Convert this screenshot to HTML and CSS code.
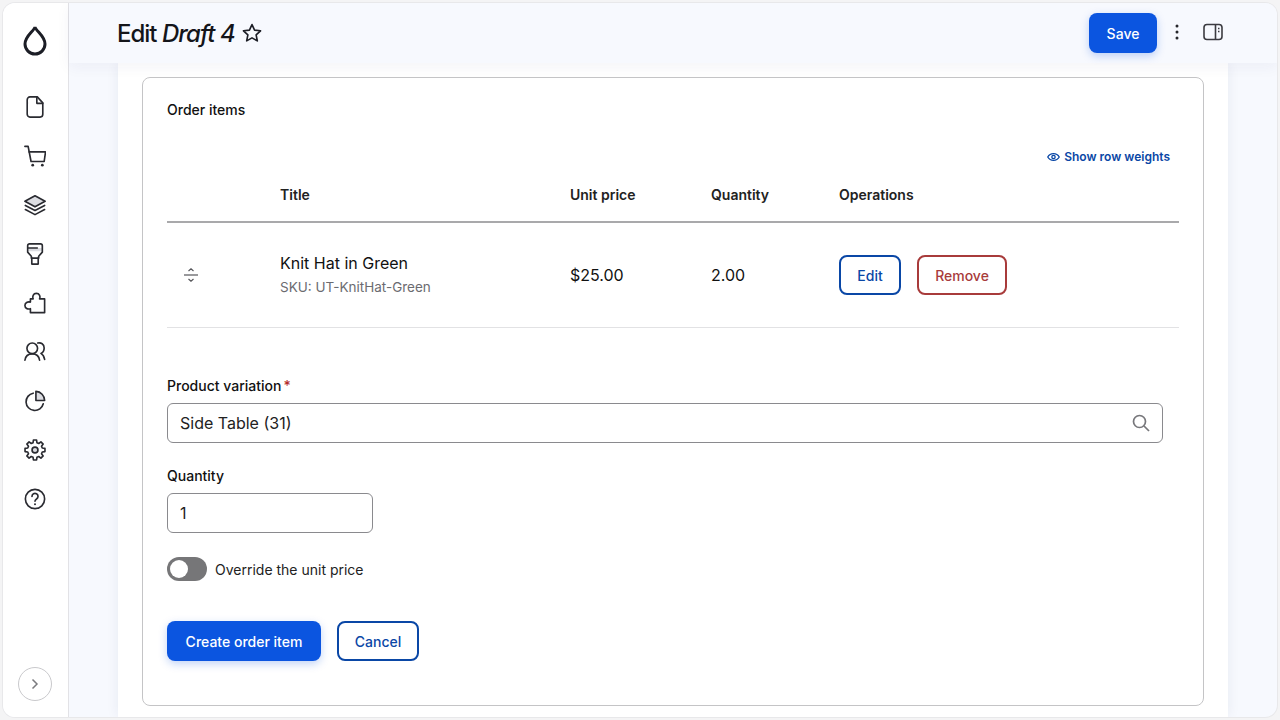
FILE: index.html
```html
<!DOCTYPE html>
<html lang="en">
<head>
    <meta charset="UTF-8">
    <title>Edit Draft 4</title>
    <link rel="stylesheet" href="styles.css">
</head>
<body>
    <div class="window">
        <aside class="sidebar">
            <svg class="logo" width="28" height="34" viewBox="0 0 28 34" fill="none" stroke="#1c1e26" stroke-width="3"><path d="M14 3 C15 7 24 12 24 20 A10 10 0 0 1 4 20 C4 12 13 7 14 3 Z"/></svg>
            <nav class="nav">
                <svg viewBox="0 0 24 24"><path d="M3.500 4a3 3 0 0 1 3-3h8l6 6.500V20a3 3 0 0 1-3 3h-11a3 3 0 0 1-3-3z"/><path d="M14 1.200V8h6.500"/></svg>
                <svg viewBox="0 0 24 24"><path d="M1 1.500h3.500L7.700 18h13.800"/><path d="M5.500 7.500H23.500L22 18"/><circle class="dot" cx="9.500" cy="22" r="1.500"/><circle class="dot" cx="20" cy="22" r="1.500"/></svg>
                <svg viewBox="0 0 24 24"><path class="tint" d="M12 2 23 8l-11 6L1 8z"/><path d="M1.500 12.500 12 18l10.500-5.500"/><path d="M1.500 17 12 22.500 22.500 17"/></svg>
                <svg viewBox="0 0 24 24"><path class="tint no-stroke" d="M5 5.500h14.500V9H5z"/><path d="M6 1h12a2 2 0 0 1 2 2v7l-4 4.500v2H8v-2l-4-4.500V3a2 2 0 0 1 2-2z"/><path d="M4.500 5.500h10"/><path d="M8.500 16.500V23h7v-6.500"/></svg>
                <svg viewBox="0 0 24 24"><path d="M7 22.500H22.500V7.500H17c1.200-2.500 0-6-3.500-6s-4.700 3.500-3.500 6H7V11c-3-.8-6 .8-6 3.700s3 4.500 6 3.500z"/></svg>
                <svg viewBox="0 0 24 24"><circle cx="9" cy="8" r="5.800"/><path d="M1 21c.5-4 3-7 8-7s7.500 3 8 7"/><path d="M15 2.200c3.500-.8 7 1 7 5.300 0 2.500-1.500 5-3.500 6 2 1.200 3.500 3.500 4 6.500"/></svg>
                <svg viewBox="0 0 24 24"><path class="tint" d="M13 1.500a10 10 0 0 1 9.500 10h-9.500z"/><path d="M10 3.500a9.500 9.500 0 1 0 11 11.500"/></svg>
                <svg viewBox="0 0 24 24"><circle class="tint" cx="12" cy="12" r="3.200"/><path d="M9.880 4.080 10.280 1.140H13.720L14.120 4.080 16.100 4.900 18.470 3.100 20.900 5.530 19.100 7.900 19.920 9.880 22.860 10.280V13.720L19.920 14.120 19.100 16.100 20.900 18.470 18.470 20.900 16.100 19.100 14.120 19.920 13.720 22.860H10.280L9.880 19.920 7.900 19.100 5.530 20.900 3.100 18.470 4.900 16.100 4.080 14.120 1.140 13.720V10.280L4.080 9.880 4.900 7.900 3.100 5.530 5.530 3.100 7.900 4.900z"/></svg>
                <svg viewBox="0 0 24 24"><circle cx="12" cy="12" r="10.500"/><path d="M8.700 9.200a3.300 3.300 0 1 1 5 2.800c-1 .7-1.700 1.300-1.700 2.500"/><circle class="dot" cx="12" cy="17.600" r="1.100"/></svg>
            </nav>
            <button class="expand"><svg width="10" height="12" viewBox="0 0 10 12" fill="none" stroke="#7b7b7f" stroke-width="1.500"><path d="M2.500 1.500 7 6l-4.500 4.500"/></svg></button>
        </aside>

        <main class="main">
            <header class="topbar">
                <h1 class="page-title">Edit <em>Draft 4</em></h1>
                <svg class="star" width="22" height="22" viewBox="0 0 24 24" fill="none" stroke="#1c1e26" stroke-width="1.800" stroke-linejoin="round"><path d="M12 2.800l2.800 6 6.500.8-4.800 4.500 1.300 6.500L12 17.300l-5.800 3.300 1.300-6.500-4.800-4.500 6.500-.8z"/></svg>
                <div class="topbar-actions">
                    <button class="btn btn-primary">Save</button>
                    <svg width="4" height="16" viewBox="0 0 4 16" fill="#26262b" class="kebab"><circle cx="2" cy="2" r="1.500"/><circle cx="2" cy="8" r="1.500"/><circle cx="2" cy="14" r="1.500"/></svg>
                    <svg class="layout-icon" width="20" height="18" viewBox="0 0 20 18" fill="none" stroke="#3b3b40" stroke-width="1.600"><rect x="1" y="1.500" width="18" height="15" rx="3"/><path d="M12.500 1.500v15"/><path d="M15 5.500h1.500M15 8.500h1.500"/></svg>
                </div>
            </header>

            <section class="panel">
                <div class="card">
                    <h2 class="card-title">Order items</h2>

                    <a class="weights-link"><svg width="13" height="10" viewBox="0 0 14 10" fill="none" stroke="#0a47a6" stroke-width="1.400"><path d="M.8 5C3.500.2 10.500.2 13.200 5 10.500 9.800 3.500 9.800.8 5z"/><circle cx="7" cy="5" r="1.800"/></svg>Show row weights</a>

                    <div class="row row-head">
                        <div class="col-drag"></div>
                        <div class="col-title">Title</div>
                        <div class="col-price">Unit price</div>
                        <div class="col-qty">Quantity</div>
                        <div class="col-ops">Operations</div>
                    </div>
                    <div class="row row-item">
                        <div class="col-drag"><svg width="16" height="14" viewBox="0 0 16 14" fill="none" stroke="#55555a" stroke-width="1.200"><path d="M5.500 3 8 .9 10.500 3"/><path d="M1 7h14" /><path d="M5.500 11 8 13.100 10.500 11"/></svg></div>
                        <div class="col-title">
                            <div class="item-name">Knit Hat in Green</div>
                            <div class="item-sku">SKU: UT-KnitHat-Green</div>
                        </div>
                        <div class="col-price">$25.00</div>
                        <div class="col-qty">2.00</div>
                        <div class="col-ops">
                            <button class="btn btn-outline btn-edit">Edit</button>
                            <button class="btn btn-danger">Remove</button>
                        </div>
                    </div>

                    <div class="field field-variation">
                        <label class="label">Product variation<span class="required">*</span></label>
                        <div class="input input-wide">
                            <span>Side Table (31)</span>
                            <svg width="18" height="18" viewBox="0 0 18 18" fill="none" stroke="#77777b" stroke-width="1.700"><circle cx="7.500" cy="7.500" r="6"/><path d="M12 12l5 5"/></svg>
                        </div>
                    </div>

                    <div class="field field-quantity">
                        <label class="label">Quantity</label>
                        <div class="input input-small"><span>1</span></div>
                    </div>

                    <div class="toggle-row">
                        <span class="toggle"><span class="toggle-knob"></span></span>
                        <span>Override the unit price</span>
                    </div>

                    <div class="form-actions">
                        <button class="btn btn-primary btn-create">Create order item</button>
                        <button class="btn btn-outline btn-cancel">Cancel</button>
                    </div>
                </div>
            </section>
        </main>
    </div>
</body>
</html>
```

FILE: styles.css
```css
* {
    margin: 0;
    padding: 0;
    box-sizing: border-box;
}

body {
    width: 1280px;
    height: 720px;
    overflow: hidden;
    padding: 3px;
    background: #f4f4f5;
    font-family: Inter, "Liberation Sans", sans-serif;
    color: #111;
}

.window {
    display: flex;
    height: 714px;
    border-radius: 12px;
    overflow: hidden;
    background: #f7f9fe;
    box-shadow: 0 0 0 1px #e8e8ea;
}

/* sidebar */
.sidebar {
    width: 66px;
    flex-shrink: 0;
    display: flex;
    flex-direction: column;
    align-items: center;
    padding-right: 1px;
    background: #fff;
    border-right: 1px solid #e2e2e6;
    position: relative;
}

.logo {
    margin-top: 21px;
}

.nav {
    display: flex;
    flex-direction: column;
    align-items: center;
    gap: 27px;
    margin-top: 38px;
}

.nav svg {
    width: 22px;
    height: 22px;
    fill: none;
    stroke: #2a2b31;
    stroke-width: 1.800;
    stroke-linecap: round;
    stroke-linejoin: round;
}

.nav .tint {
    fill: #dcdde2;
}

.nav .no-stroke {
    stroke: none;
}

.nav .dot {
    fill: #2a2b31;
    stroke: none;
}

.expand {
    margin-top: auto;
    margin-bottom: 16px;
    width: 34px;
    height: 34px;
    border: 1px solid #c9c9cc;
    border-radius: 50%;
    background: #fff;
    display: flex;
    align-items: center;
    justify-content: center;
}

/* main */
.main {
    flex: 1;
    min-width: 0;
    display: flex;
    flex-direction: column;
}

.topbar {
    height: 60px;
    flex-shrink: 0;
    display: flex;
    align-items: center;
    padding: 0 0 0 48px;
    background: #f7f9fe;
    box-shadow: 0 4px 14px rgba(30, 40, 90, 0.05);
    position: relative;
    z-index: 1;
}

.page-title {
    font-size: 24px;
    font-weight: 500;
    letter-spacing: -1px;
    color: #14151a;
}

.page-title em {
    font-style: italic;
}

.star {
    margin-left: 6px;
}

.topbar-actions {
    margin-left: auto;
    display: flex;
    align-items: center;
    margin-right: 54px;
}

.kebab {
    margin: -2px 24px 0 18px;
}

.layout-icon {
    margin-top: -2px;
}

.panel {
    flex: 1;
    margin: 0 49px 0 49px;
    padding: 14px 24px 11px 24px;
    background: #fff;
    box-shadow: 0 0 12px rgba(30, 40, 90, 0.07);
}

.card {
    height: 100%;
    border: 1px solid #c4c4c6;
    border-radius: 8px;
    padding: 23px 24px 0 24px;
    font-size: 14px;
    position: relative;
}

.card-title {
    font-size: 14px;
    font-weight: 500;
    line-height: 17px;
    color: #111;
}

.weights-link {
    display: flex;
    justify-content: flex-end;
    align-items: center;
    gap: 4px;
    margin-top: 30px;
    padding-right: 9px;
    font-size: 12px;
    font-weight: 600;
    line-height: 18px;
    color: #0a47a6;
}

/* table */
.row {
    display: flex;
    align-items: center;
}

.row-head {
    height: 57px;
    border-bottom: 2px solid #a9a9ab;
    font-size: 14px;
    font-weight: 600;
    color: #222;
    align-items: flex-start;
    padding-top: 19px;
    line-height: 20px;
}

.row-item {
    height: 105px;
    border-bottom: 1px solid #e2e2e4;
    font-size: 16px;
}

.col-drag {
    width: 113px;
    padding-left: 16px;
    display: flex;
}

.col-title {
    width: 290px;
}

.col-price {
    width: 141px;
}

.col-qty {
    width: 128px;
}

.item-name {
    font-size: 16px;
    line-height: 24px;
}

.item-sku {
    font-size: 13.500px;
    line-height: 20px;
    color: #6b6b70;
    margin-top: 2px;
    margin-bottom: 2px;
}

.col-ops {
    display: flex;
    gap: 16px;
}

/* buttons */
.btn {
    height: 40px;
    border-radius: 8px;
    font-family: inherit;
    font-size: 14px;
    font-weight: 500;
    display: inline-flex;
    align-items: center;
    justify-content: center;
    background: #fff;
}

.btn-primary {
    width: 68px;
    border: none;
    background: #0b55e0;
    color: #fff;
    box-shadow: 0 3px 8px rgba(11, 85, 224, 0.25);
}

.btn-outline {
    border: 2px solid #0a47a6;
    color: #0a47a6;
}

.btn-danger {
    width: 90px;
    border: 2px solid #a83b3b;
    color: #a83b3b;
}

.btn-edit {
    width: 62px;
}

.btn-create {
    width: 154px;
}

.btn-cancel {
    width: 82px;
}

/* form */
.field-variation {
    margin-top: 49px;
}

.field-quantity {
    margin-top: 24px;
}

.label {
    display: block;
    font-size: 14px;
    font-weight: 500;
    line-height: 17px;
    margin-bottom: 9px;
}

.required {
    color: #b32d2d;
    margin-left: 2px;
}

.input {
    height: 40px;
    border: 1px solid #8a8a8e;
    border-radius: 6px;
    display: flex;
    align-items: center;
    justify-content: space-between;
    padding: 0 12px;
    font-size: 16px;
    color: #222;
}

.input-wide {
    width: 996px;
}

.input-small {
    width: 206px;
}

.toggle-row {
    display: flex;
    align-items: center;
    gap: 8px;
    margin-top: 24px;
    font-size: 14px;
    color: #222;
}

.toggle {
    width: 40px;
    height: 24px;
    border-radius: 12px;
    background: #767678;
    display: flex;
    align-items: center;
    padding-left: 3px;
}

.toggle-knob {
    width: 18px;
    height: 18px;
    border-radius: 50%;
    background: #fff;
}

.form-actions {
    display: flex;
    gap: 16px;
    margin-top: 40px;
}
```
